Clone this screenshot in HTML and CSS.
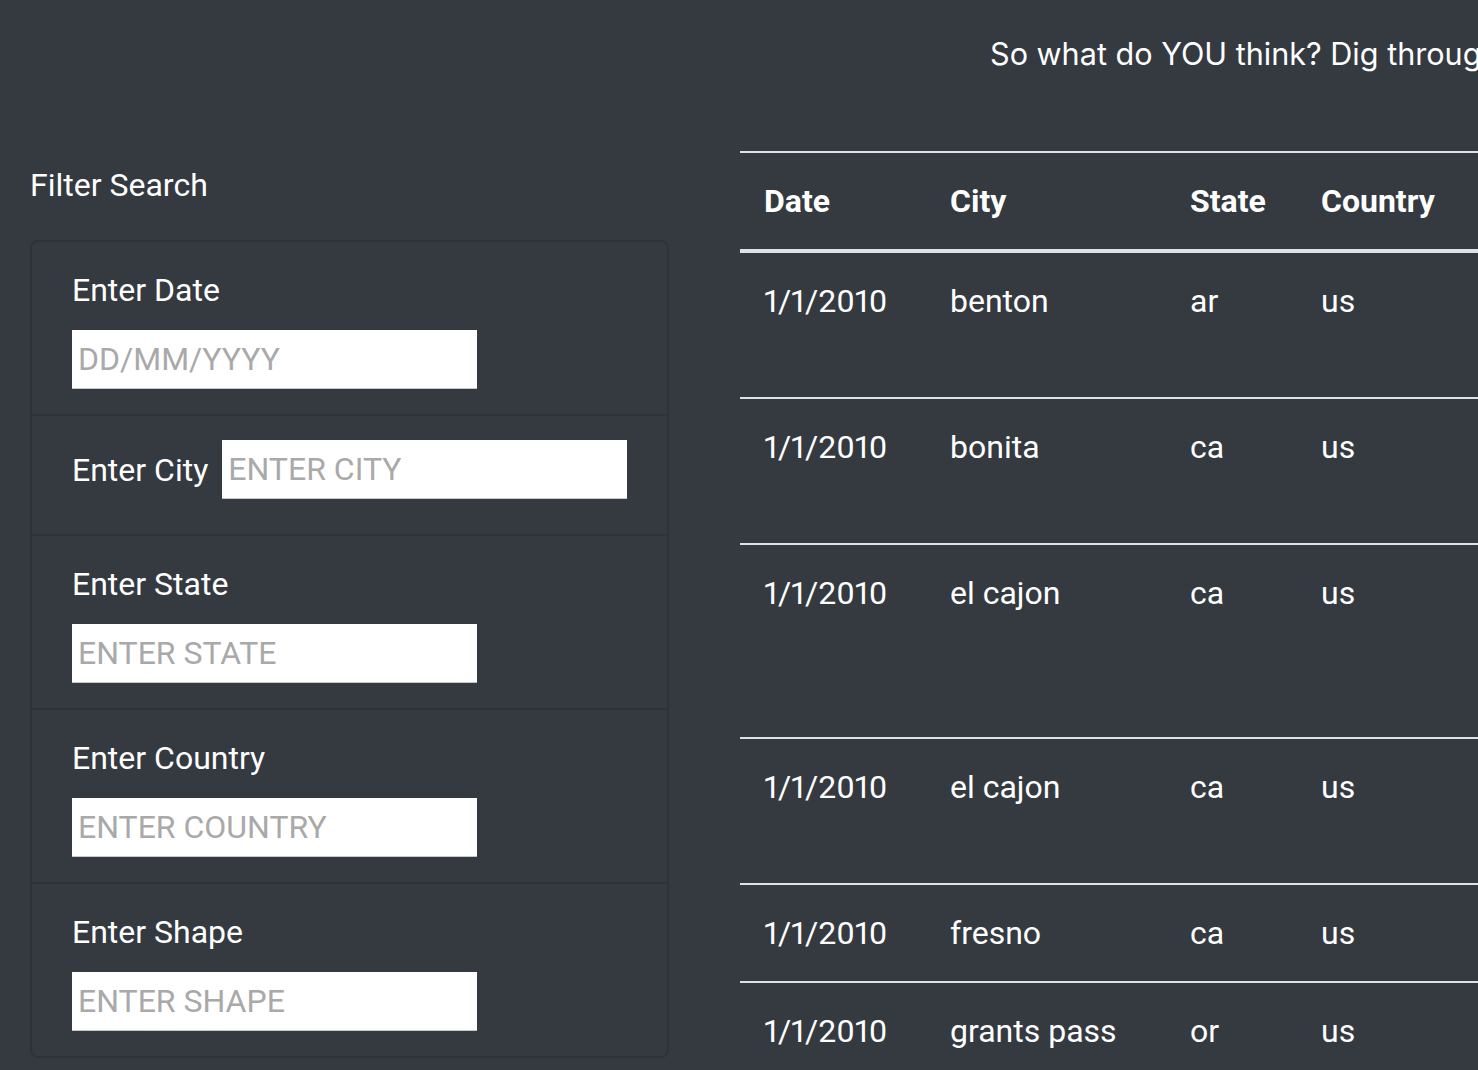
FILE: index.html
```html
<!DOCTYPE html>
<html lang="en">
<head>
<meta charset="utf-8">
<title>UFO Sightings</title>
<link rel="stylesheet" href="styles.css">
</head>
<body>
  <header class="intro">
    <p class="intro-text">So what do YOU think? Dig through the data yourself and see if you can find anything interesting.</p>
  </header>
  <main class="layout">
    <aside class="filters">
      <div class="filters-title">Filter Search</div>
      <form class="card">
        <ul class="list">
          <li class="item">
            <label class="label-block" for="datetime">Enter Date</label>
            <input class="field" id="datetime" type="text" placeholder="DD/MM/YYYY">
          </li>
          <li class="item item-inline">
            <label class="label-inline" for="city">Enter City</label>
            <input class="field" id="city" type="text" placeholder="ENTER CITY">
          </li>
          <li class="item">
            <label class="label-block" for="state">Enter State</label>
            <input class="field" id="state" type="text" placeholder="ENTER STATE">
          </li>
          <li class="item">
            <label class="label-block" for="country">Enter Country</label>
            <input class="field" id="country" type="text" placeholder="ENTER COUNTRY">
          </li>
          <li class="item">
            <label class="label-block" for="shape">Enter Shape</label>
            <input class="field" id="shape" type="text" placeholder="ENTER SHAPE">
          </li>
        </ul>
      </form>
    </aside>
    <section class="results">
      <table class="table">
        <colgroup>
          <col class="c-date">
          <col class="c-city">
          <col class="c-state">
          <col class="c-country">
          <col class="c-shape">
          <col class="c-duration">
          <col class="c-comments">
        </colgroup>
        <thead>
          <tr>
            <th>Date</th>
            <th>City</th>
            <th>State</th>
            <th>Country</th>
            <th>Shape</th>
            <th>Duration</th>
            <th>Comments</th>
          </tr>
        </thead>
        <tbody>
          <tr>
            <td>1/1/2010</td><td>benton</td><td>ar</td><td>us</td><td>circle</td><td>5 mins.</td>
            <td>4 bright green circles high in the sky going in circles then one bright green light at my front door.</td>
          </tr>
          <tr>
            <td>1/1/2010</td><td>bonita</td><td>ca</td><td>us</td><td>light</td><td>13 minutes</td>
            <td>Three bright red lights witnessed floating stationary over San Diego New Years Day 2010</td>
          </tr>
          <tr>
            <td>1/1/2010</td><td>el cajon</td><td>ca</td><td>us</td><td>triangle</td><td>10 minutes</td>
            <td>2 triangular shaped objects, one behind the other. Both displaying the same lighting and colors. Both moved in a uniform motion.</td>
          </tr>
          <tr>
            <td>1/1/2010</td><td>el cajon</td><td>ca</td><td>us</td><td>sphere</td><td>20 minutes</td>
            <td>Bright red lights moving north to north west from Jamacha Rd. toward San Diego, three of them in a row.</td>
          </tr>
          <tr>
            <td>1/1/2010</td><td>fresno</td><td>ca</td><td>us</td><td>light</td><td>2 minutes</td>
            <td>Bright orange light moving slowly west.</td>
          </tr>
          <tr>
            <td>1/1/2010</td><td>grants pass</td><td>or</td><td>us</td><td>fireball</td><td>5 minutes</td>
            <td>Fireball seen over the river.</td>
          </tr>
        </tbody>
      </table>
    </section>
  </main>
</body>
</html>
```

FILE: styles.css
```css
* {
  box-sizing: border-box;
}

html,
body {
  overflow: hidden;
}

body {
  margin: 0;
  background: #343a40;
  color: #ffffff;
  font-family: Roboto, "Liberation Sans", sans-serif;
  font-size: 32px;
  line-height: 48px;
  font-variant-numeric: proportional-nums;
}

.intro {
  padding: 30px 0 0 990px;
  white-space: nowrap;
}

.intro-text {
  margin: 0;
  font-family: Inter, "Noto Sans", sans-serif;
  font-size: 30.6px;
  line-height: 48px;
}

.layout {
  display: flex;
  align-items: flex-start;
  margin-top: 73px;
}

.filters {
  flex: 0 0 auto;
  width: 639px;
  margin-left: 30px;
}

.filters-title {
  margin-top: 10px;
  margin-bottom: 31px;
}

.card {
  margin: 0;
  border: 2px solid #2e3338;
  border-radius: 8px;
}

.list {
  list-style: none;
  margin: 0;
  padding: 0;
}

.item {
  padding: 24px 40px 25px;
  border-bottom: 2px solid #2e3338;
}

.item:last-child {
  border-bottom: 0;
}

.item-inline {
  display: flex;
  align-items: center;
  gap: 14px;
  padding-bottom: 35px;
}

.label-block {
  display: block;
  margin-bottom: 16px;
}

.label-inline {
  display: block;
  white-space: nowrap;
}

.field {
  display: block;
  width: 405px;
  height: 59px;
  margin: 0;
  padding: 0 6px;
  border: 0;
  border-bottom: 1px solid #c6c6c6;
  border-radius: 0;
  background: #ffffff;
  color: #212529;
  font-family: Roboto, "Liberation Sans", sans-serif;
  font-size: 32px;
  outline: none;
}

.field::placeholder {
  color: #a9a9a9;
  opacity: 1;
}

.results {
  flex: 0 0 auto;
  margin-left: 71px;
}

.table {
  table-layout: fixed;
  width: 2100px;
  border-collapse: collapse;
}

.c-date { width: 186px; }
.c-city { width: 240px; }
.c-state { width: 131px; }
.c-country { width: 180px; }
.c-shape { width: 200px; }
.c-duration { width: 263px; }
.c-comments { width: 900px; }

.table th,
.table td {
  padding: 24px;
  text-align: left;
  vertical-align: top;
  border-top: 2px solid #dee2e6;
}

.table th {
  font-weight: 700;
  border-bottom: 4px solid #dee2e6;
  white-space: nowrap;
}
```
